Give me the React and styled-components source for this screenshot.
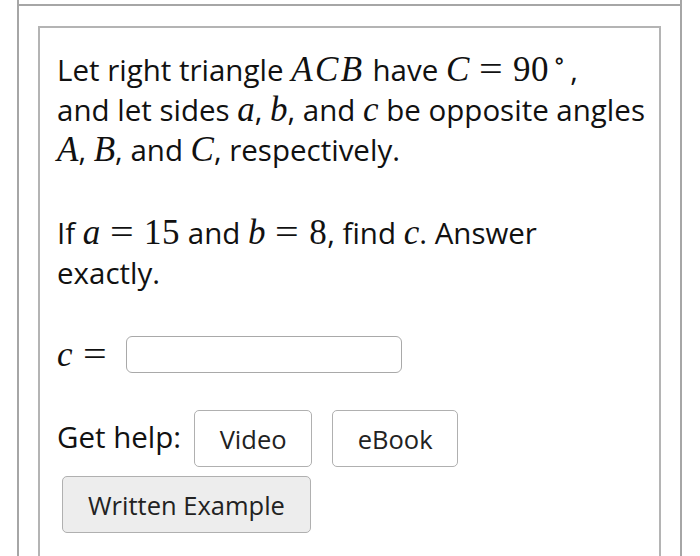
import React from 'react';
import styled, { createGlobalStyle } from 'styled-components';

const GlobalStyle = createGlobalStyle`
  html, body {
    margin: 0;
    padding: 0;
    background: #ffffff;
  }
  body {
    font-family: "Open Sans", "Noto Sans", sans-serif;
    color: #111;
  }
`;

const Frame = styled.div`
  margin: 0 18px 0 17px;
  height: 556px;
  border-left: 2px solid #a6a6a6;
  border-right: 2px solid #a6a6a6;
  padding-top: 4px;
  box-sizing: border-box;
  overflow: hidden;
`;

const Divider = styled.div`
  height: 2px;
  background: #a6a6a6;
`;

const Card = styled.div`
  margin: 20px 19px 0 19px;
  border: 2px solid #b4b4b4;
  border-bottom: none;
  padding: 22px 17px 0 17px;
  height: 600px;
`;

const Para = styled.p`
  margin: 0 0 43px 0;
  font-size: 29.5px;
  line-height: 40px;
  white-space: nowrap;
`;

const M = styled.span`
  font-family: "Liberation Serif", "DejaVu Serif", serif;
  font-style: ${(p) => (p.$upright ? 'normal' : 'italic')};
  font-size: 35px;
  letter-spacing: ${(p) => (p.$upright ? '0.5px' : p.$wide ? '2.5px' : '0')};
`;

const Rel = styled.span`
  font-family: "Liberation Serif", "DejaVu Serif", serif;
  font-size: 35px;
  display: inline-block;
  line-height: 1;
  margin: 0 12px;
  transform: scaleX(1.2);
`;

const Deg = styled.sup`
  font-family: "Liberation Serif", "DejaVu Serif", serif;
  font-size: 25px;
  line-height: 0;
  vertical-align: 12px;
  margin-left: 4px;
  margin-right: 5px;
`;

const AnswerRow = styled.div`
  display: flex;
  align-items: center;
  height: 37px;
`;

const AnswerInput = styled.input`
  width: 276px;
  height: 37px;
  box-sizing: border-box;
  border: 1.5px solid #a9a9a9;
  border-radius: 6px;
  margin-left: 10px;
  outline: none;
`;

const HelpRow = styled.div`
  display: flex;
  align-items: center;
  margin-top: 37px;
  font-size: 29.5px;
`;

const HelpLabel = styled.span`
  margin-right: 13px;
  margin-top: -4px;
`;

const HelpButton = styled.button`
  font-family: "Open Sans", "Noto Sans", sans-serif;
  font-size: 25.5px;
  color: #222;
  height: 57px;
  width: ${(p) => p.$w}px;
  margin-right: ${(p) => p.$gap || 0}px;
  background: ${(p) => (p.$filled ? '#ededed' : '#ffffff')};
  border: 1.5px solid #b0b0b0;
  border-radius: 5px;
  padding: 0;
  box-sizing: border-box;
`;

const SecondRow = styled.div`
  display: flex;
  margin-top: 9px;
  padding-left: 5px;
`;

export default function App() {
  return (
    <>
      <GlobalStyle />
      <Frame>
        <Divider />
        <Card>
          <Para>
            Let right triangle <M $wide>ACB</M> have <M>C</M>
            <Rel>=</Rel>
            <M $upright>90</M>
            <Deg>∘</Deg>,
            <br />
            and let sides <M>a</M>, <M>b</M>, and <M>c</M> be opposite angles
            <br />
            <M>A</M>, <M>B</M>, and <M>C</M>, respectively.
          </Para>
          <Para>
            If <M>a</M>
            <Rel>=</Rel>
            <M $upright>15</M> and <M>b</M>
            <Rel>=</Rel>
            <M $upright>8</M>, find <M>c</M>. Answer
            <br />
            exactly.
          </Para>
          <AnswerRow>
            <M>c</M>
            <Rel>=</Rel>
            <AnswerInput type="text" />
          </AnswerRow>
          <HelpRow>
            <HelpLabel>Get help:</HelpLabel>
            <HelpButton $w={118} $gap={20}>Video</HelpButton>
            <HelpButton $w={126}>eBook</HelpButton>
          </HelpRow>
          <SecondRow>
            <HelpButton $w={249} $filled>Written Example</HelpButton>
          </SecondRow>
        </Card>
      </Frame>
    </>
  );
}
